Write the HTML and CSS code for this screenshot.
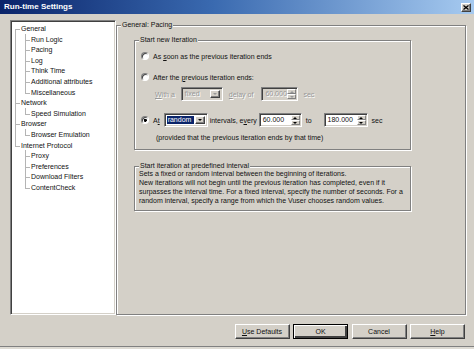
FILE: index.html
```html
<!DOCTYPE html>
<html>
<head>
<meta charset="utf-8">
<title>Run-time Settings</title>
<link rel="stylesheet" href="styles.css">
</head>
<body>
<div class="window">
  <div class="titlebar">
    <span class="title">Run-time Settings</span>
    <span class="close"><svg width="6" height="5" viewBox="0 0 6 5"><path d="M0.5 0.5L5.5 4.5M5.5 0.5L0.5 4.5" stroke="#000" stroke-width="1.3"/></svg></span>
  </div>
  <div class="main">
    <div class="tree">
      <ul class="tree-list">
        <li class="node"><span>General</span>
          <ul class="kids">
            <li>Run Logic</li>
            <li>Pacing</li>
            <li>Log</li>
            <li>Think Time</li>
            <li>Additional attributes</li>
            <li>Miscellaneous</li>
          </ul>
        </li>
        <li class="node"><span>Network</span>
          <ul class="kids"><li>Speed Simulation</li></ul>
        </li>
        <li class="node"><span>Browser</span>
          <ul class="kids"><li>Browser Emulation</li></ul>
        </li>
        <li class="node last"><span>Internet Protocol</span>
          <ul class="kids">
            <li>Proxy</li>
            <li>Preferences</li>
            <li>Download Filters</li>
            <li>ContentCheck</li>
          </ul>
        </li>
      </ul>
    </div>
    <fieldset class="group outer">
      <legend>General: Pacing</legend>
      <fieldset class="group inner first">
        <legend>Start new Iteration</legend>
        <div class="row r1"><span class="radio"></span><span>As <u>s</u>oon as the previous iteration ends</span></div>
        <div class="row r2"><span class="radio"></span><span>After the <u>p</u>revious iteration ends:</span></div>
        <div class="row r3 disabled">
          <span class="with"><u>W</u>ith a</span>
          <span class="select fixed"><span class="val">fixed</span><span class="drop"><span class="tri"></span></span></span>
          <span class="delay"><u>d</u>elay of</span>
          <span class="spin s-delay"><span class="num">60.000</span><span class="arrows"><span class="ab"><span class="up"></span></span><span class="ab"><span class="dn"></span></span></span></span>
          <span class="sec1">sec</span>
        </div>
        <div class="row r4">
          <span class="radio on"></span><span class="at">A<u>t</u></span>
          <span class="select rnd"><span class="val sel">random</span><span class="drop"><span class="tri"></span></span></span>
          <span class="every">intervals, e<u>v</u>ery</span>
          <span class="spin s-from"><span class="num">60.000</span><span class="arrows"><span class="ab"><span class="up"></span></span><span class="ab"><span class="dn"></span></span></span></span>
          <span class="to">to</span>
          <span class="spin s-to"><span class="num">180.000</span><span class="arrows"><span class="ab"><span class="up"></span></span><span class="ab"><span class="dn"></span></span></span></span>
          <span class="sec2">sec</span>
        </div>
        <div class="row r5">(provided that the previous iteration ends by that time)</div>
      </fieldset>
      <fieldset class="group inner second">
        <legend>Start iteration at predefined interval</legend>
        <p class="desc">Sets a fixed or random interval between the beginning of iterations.<br>New iterations will not begin until the previous iteration has completed, even if it<br>surpasses the interval time. For a fixed interval, specify the number of seconds. For a<br>random interval, specify a range from which the Vuser chooses random values.</p>
      </fieldset>
    </fieldset>
  </div>
  <div class="buttons">
    <button class="btn"><u>U</u>se Defaults</button>
    <button class="btn default">OK</button>
    <button class="btn">Cancel</button>
    <button class="btn"><u>H</u>elp</button>
  </div>
</div>
</body>
</html>
```
FILE: styles.css
```css
* { box-sizing: border-box; }
html, body { margin: 0; padding: 0; }
body {
  width: 474px;
  height: 349px;
  overflow: hidden;
  background: #dedbd4;
  font-family: "Liberation Sans", Arial, sans-serif;
  font-size: 7px;
  color: #111;
}
u { text-decoration: underline; text-underline-offset: 1px; }

.window {
  width: 474px;
  height: 347px;
  background: #d4d0c8;
  border-bottom: 1px solid #808080;
  display: flex;
  flex-direction: column;
}

.titlebar {
  height: 14px;
  flex: none;
  display: flex;
  align-items: center;
  justify-content: space-between;
  padding: 0 3px 0 4px;
  background: linear-gradient(to right, #0a246a 0%, #3a6ab0 45%, #a6caf0 100%);
}
.title {
  color: #fff;
  font-weight: bold;
  font-size: 8px;
  line-height: 14px;
}
.close {
  width: 10px;
  height: 9px;
  display: flex;
  align-items: center;
  justify-content: center;
  background: #d4d0c8;
  border: 1px solid;
  border-color: #fff #404040 #404040 #fff;
  box-shadow: inset -1px -1px #808080;
}

.main {
  flex: none;
  height: 295px;
  margin-top: 6px;
  padding: 0 8px 0 10px;
  display: flex;
}

.tree {
  width: 106px;
  flex: none;
  background: #fff;
  border: 1px solid;
  border-color: #808080 #fff #fff #808080;
  box-shadow: inset 1px 1px #404040, inset -1px -1px #d4d0c8;
  padding-top: 3px;
}
.tree-list, .kids {
  list-style: none;
  margin: 0;
  padding: 0;
}
.node {
  position: relative;
  padding-left: 10px;
  line-height: 10.6px;
  white-space: nowrap;
}
.node::before {
  content: "";
  position: absolute;
  left: 4px;
  top: 5px;
  width: 5px;
  border-top: 1px solid #b4b4b4;
}
.node::after {
  content: "";
  position: absolute;
  left: 4px;
  top: 5px;
  bottom: -5px;
  border-left: 1px solid #b4b4b4;
}
.node.last::after { display: none; }
.kids li {
  position: relative;
  padding-left: 10px;
}
.kids li::before {
  content: "";
  position: absolute;
  left: 4px;
  top: 5px;
  width: 5px;
  border-top: 1px solid #b4b4b4;
}
.kids li::after {
  content: "";
  position: absolute;
  left: 4px;
  top: -5.6px;
  height: 11px;
  border-left: 1px solid #b4b4b4;
}
.kids li:first-child::after {
  top: -1px;
  height: 6px;
}

.group {
  margin: 0;
  border: 1px solid #808080;
  box-shadow: inset 1px 1px #fff, 1px 1px #fff;
  min-width: 0;
}
.group legend {
  padding: 0 1px;
  line-height: 10px;
  background: #d4d0c8;
  white-space: nowrap;
}
.outer {
  flex: 1;
  padding: 0 4px;
}
.inner {
  width: 277px;
  margin-left: 13px;
  padding: 0 4px;
}
.inner.first {
  margin-top: 5px;
  padding-bottom: 7px;
}
.inner.second {
  margin-top: 12px;
  padding-bottom: 5px;
}
.inner.second legend { line-height: 8px; }

.row {
  display: flex;
  align-items: center;
  height: 12px;
  white-space: nowrap;
}
.r1 { margin-top: 5px; }
.r2 { margin-top: 9px; }
.r3 { margin-top: 4px; height: 14px; }
.r4 { margin-top: 12px; height: 14px; }
.r5 { margin-top: 5px; height: 10px; padding-left: 17px; }

.radio {
  width: 8px;
  height: 8px;
  flex: none;
  margin: 0 4px 0 2px;
  border-radius: 50%;
  border: 1px solid;
  border-color: #808080 #fff #fff #808080;
  background: #fff;
  box-shadow: inset 1px 1px #404040;
}
.radio.on {
  background: radial-gradient(circle at 55% 55%, #000 0 1.3px, #fff 1.8px);
}

.disabled { color: #979797; text-shadow: 1px 1px #fff; }
.with { margin-left: 16px; }

.select {
  display: flex;
  height: 14px;
  flex: none;
  border: 1px solid;
  border-color: #808080 #fff #fff #808080;
  box-shadow: inset 1px 1px #404040, inset -1px -1px #d4d0c8;
  background: #fff;
  padding: 2px;
}
.select.fixed { width: 42px; margin-left: 6px; background: #d4d0c8; }
.select.rnd { width: 44px; margin-left: 4px; }
.val {
  flex: 1;
  line-height: 8px;
  padding-left: 1px;
}
.val.sel {
  background: #0a246a;
  color: #fff;
  margin-right: 1px;
}
.drop {
  width: 10px;
  flex: none;
  display: flex;
  align-items: center;
  justify-content: center;
  background: #d4d0c8;
  border: 1px solid;
  border-color: #fff #404040 #404040 #fff;
  box-shadow: inset -1px -1px #808080;
}
.tri {
  width: 0;
  height: 0;
  border-left: 2.5px solid transparent;
  border-right: 2.5px solid transparent;
  border-top: 2.5px solid #000;
}
.disabled .tri { border-top-color: #979797; }

.delay { margin-left: 6px; }

.spin {
  display: flex;
  height: 14px;
  flex: none;
  border: 1px solid;
  border-color: #808080 #fff #fff #808080;
  box-shadow: inset 1px 1px #404040, inset -1px -1px #d4d0c8;
  background: #fff;
  padding: 2px 1px 2px 2px;
}
.disabled .spin { background: #d4d0c8; }
.s-delay { width: 37px; margin-left: 8px; }
.s-from { width: 43px; margin-left: 2px; }
.s-to { width: 44px; margin-left: 12px; }
.num {
  flex: 1;
  line-height: 8px;
  padding-left: 1px;
}
.arrows {
  width: 9px;
  flex: none;
  display: flex;
  flex-direction: column;
  margin: -1px 0;
}
.ab {
  flex: 1;
  display: flex;
  align-items: center;
  justify-content: center;
  background: #d4d0c8;
  border: 1px solid;
  border-color: #fff #808080 #808080 #fff;
}
.up {
  width: 0; height: 0;
  border-left: 2px solid transparent;
  border-right: 2px solid transparent;
  border-bottom: 2px solid #000;
}
.dn {
  width: 0; height: 0;
  border-left: 2px solid transparent;
  border-right: 2px solid transparent;
  border-top: 2px solid #000;
}
.disabled .up { border-bottom-color: #979797; }
.disabled .dn { border-top-color: #979797; }
.sec1 { margin-left: 5px; }
.every { margin-left: 2px; }
.to { margin-left: 4px; }
.sec2 { margin-left: 4px; }

.desc {
  margin: -1px 0 0 0;
  line-height: 9px;
  white-space: nowrap;
}

.buttons {
  flex: none;
  display: flex;
  justify-content: flex-end;
  gap: 3.5px;
  margin-top: 9px;
  padding-right: 9px;
}
.btn {
  width: 55px;
  height: 15px;
  padding: 0;
  font-family: "Liberation Sans", Arial, sans-serif;
  font-size: 7px;
  color: #111;
  background: #d4d0c8;
  border: 1px solid;
  border-color: #fff #404040 #404040 #fff;
  box-shadow: inset -1px -1px #808080;
}
.btn.default {
  border-color: #000;
  box-shadow: inset 1px 1px #fff, inset -2px -2px #404040, inset -1px -1px #808080;
}
```
